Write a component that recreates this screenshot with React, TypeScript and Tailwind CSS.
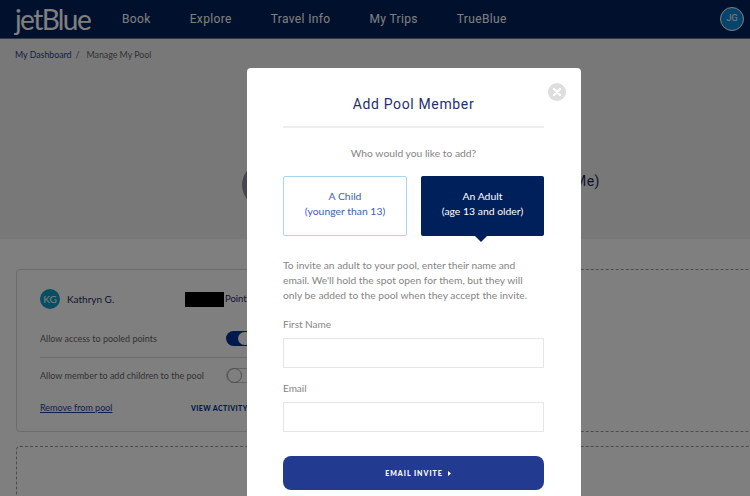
const NAV = ['Book', 'Explore', 'Travel Info', 'My Trips', 'TrueBlue'];

function Header() {
  return (
    <header className="flex h-[39px] items-center border-b border-[#6b7280] bg-[#00205b] font-['Roboto',sans-serif]">
      <div className="ml-[15px] w-[107px] font-['Lato',sans-serif] text-[28px] leading-[36px] font-normal tracking-[-1.6px] text-white">
        jetBlue
      </div>
      <nav className="flex gap-[39px] text-[12px] tracking-[0.35px] text-white">
        {NAV.map(item => (
          <span key={item}>{item}</span>
        ))}
      </nav>
      <div className="mr-[6px] ml-auto flex h-[24px] w-[24px] items-center justify-center rounded-full border border-white bg-[#0f88d8] text-[9px] text-white">
        JG
      </div>
    </header>
  );
}

function MemberCard() {
  return (
    <div className="h-[163px] w-[400px] shrink-0 rounded-[4px] border border-[#d8d8d8] px-[23px] pt-[19px] font-['Lato',sans-serif]">
      <div className="flex items-center">
        <div className="flex h-[20px] w-[20px] items-center justify-center rounded-full bg-[#0e9cc4] text-[10px] text-white">KG</div>
        <span className="ml-[7px] w-[118px] text-[10px] text-[#1f2a5c]">Kathryn G.</span>
        <div className="h-[15px] w-[39px] bg-black" />
        <span className="ml-[1px] text-[9.5px] text-[#1f2a5c]">Points</span>
      </div>
      <div className="mt-[22px] flex h-[15px] items-center text-[9px] text-[#666666]">
        <span className="w-[186px]">Allow access to pooled points</span>
        <div className="flex h-[15px] w-[27px] items-center justify-end rounded-full bg-[#00339a] px-[1px]">
          <div className="h-[13px] w-[14px] rounded-full bg-white" />
        </div>
      </div>
      <div className="mt-[11px] border-t border-[#d8d8d8]" />
      <div className="mt-[10px] flex h-[15px] items-center text-[9px] text-[#666666]">
        <span className="w-[186px]">Allow member to add children to the pool</span>
        <div className="flex h-[15px] w-[36px] items-center rounded-full border border-[#c8c8c8]">
          <div className="h-[15px] w-[15px] rounded-full border border-[#999999] bg-white" />
        </div>
      </div>
      <div className="mt-[18px] flex items-center">
        <span className="w-[151px] text-[9px] text-[#1f3f96] underline">Remove from pool</span>
        <span className="text-[7px] font-black tracking-[0.4px] whitespace-nowrap text-[#00339a]">VIEW ACTIVITY</span>
      </div>
    </div>
  );
}

function PageBehind() {
  return (
    <>
      <Header />
      <section className="h-[200px] bg-[#f0f0f0]">
        <div className="pt-[9px] pl-[15px] font-['Lato',sans-serif] text-[8.8px] text-[#666666]">
          <span className="text-[#1f3f96]">My Dashboard</span>
          <span className="ml-[4px]">/</span>
          <span className="ml-[7px]">Manage My Pool</span>
        </div>
        <div className="mt-[101px] flex items-center justify-between pr-[150px] pl-[242px]">
          <div className="h-[46px] w-[46px] rounded-full bg-[#8a8f98]" />
          <span className="-mt-[8px] font-['Roboto',sans-serif] text-[14px] tracking-[0.5px] text-[#1f2a5c]">Me)</span>
        </div>
      </section>
      <section className="flex gap-[16px] pt-[30px] pl-[16px]">
        <MemberCard />
        <div className="h-[163px] w-[400px] shrink-0 rounded-[4px] border border-dashed border-[#999999]" />
      </section>
      <div className="mt-[14px] ml-[16px] h-[80px] w-[800px] rounded-[4px] border border-dashed border-[#999999]" />
    </>
  );
}

function Modal() {
  return (
    <div className="absolute top-[68px] left-[247px] h-[460px] w-[334px] rounded-[4px] bg-white pr-[37px] pl-[36px] font-['Lato',sans-serif]">
      <button className="absolute top-[15px] right-[15px] flex h-[18px] w-[18px] items-center justify-center rounded-full bg-[#dddddd]">
        <svg width="8" height="8" viewBox="0 0 8 8" fill="none" stroke="white" strokeWidth="2.4" strokeLinecap="round">
          <path d="M1 1l6 6M7 1l-6 6" />
        </svg>
      </button>

      <h2 className="border-b-2 border-[#eeeeee] pt-[27px] pb-[13px] text-center font-['Roboto',sans-serif] text-[14px] leading-[18px] tracking-[0.65px] text-[#1f2f6e]">
        Add Pool Member
      </h2>
      <p className="mt-[18px] text-center text-[10.3px] leading-[15px] text-[#858585]">
        Who would you like to add?
      </p>

      <div className="mt-[15px] flex justify-between">
        <button className="h-[60px] w-[124px] rounded-[2px] border border-[#a8d8f0] pb-[4px] text-center text-[10.4px] leading-[15px] text-[#3f5bb5]">
          A Child
          <br />
          (younger than 13)
        </button>
        <button className="relative h-[60px] w-[123px] rounded-[2px] bg-[#00205b] pb-[4px] text-center text-[10.4px] leading-[15px] text-white">
          An Adult
          <br />
          (age 13 and older)
          <span className="absolute -bottom-[6px] left-[54px] h-0 w-0 border-x-[6px] border-t-[6px] border-x-transparent border-t-[#00205b]" />
        </button>
      </div>

      <p className="mt-[22px] text-[10.25px] leading-[15px] text-[#858585]">
        To invite an adult to your pool, enter their name and email. We'll hold the spot open for them, but they will only be added to the pool when they accept the invite.
      </p>

      <label className="mt-[14px] block text-[10px] leading-[15px] text-[#858585]">First Name</label>
      <div className="mt-[6px] h-[30px] border border-[#e6e6e6]" />
      <label className="mt-[13px] block text-[10px] leading-[15px] text-[#858585]">Email</label>
      <div className="mt-[6px] h-[30px] border border-[#e6e6e6]" />

      <button className="mt-[24px] flex h-[34px] w-full items-center justify-center gap-[5px] rounded-[8px] bg-[#223a8f] pl-[9px] text-[7px] font-black tracking-[1px] text-white">
        EMAIL INVITE
        <svg width="3" height="5" viewBox="0 0 3 5" fill="white">
          <path d="M0 0l3 2.5L0 5z" />
        </svg>
      </button>
    </div>
  );
}

export default function App() {
  return (
    <div className="relative h-[496px] w-[750px] overflow-hidden bg-white">
      <PageBehind />
      <div className="absolute inset-0 bg-black/50" />
      <Modal />
    </div>
  );
}
